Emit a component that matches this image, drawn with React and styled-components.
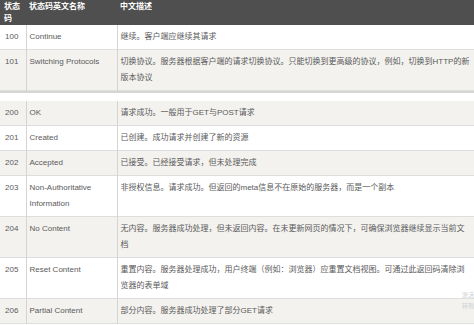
import styled, { createGlobalStyle } from "styled-components";

const GlobalStyle = createGlobalStyle`
  html, body {
    margin: 0;
    padding: 0;
    background: #fff;
    overflow: hidden;
  }
  body {
    font-family: "Liberation Sans", "Noto Sans CJK SC", sans-serif;
  }
`;

const infoRows = [
  { code: "100", name: "Continue", desc: "继续。客户端应继续其请求" },
  {
    code: "101",
    name: "Switching Protocols",
    desc: "切换协议。服务器根据客户端的请求切换协议。只能切换到更高级的协议，例如，切换到HTTP的新版本协议",
  },
];

const successRows = [
  { code: "200", name: "OK", desc: "请求成功。一般用于GET与POST请求" },
  { code: "201", name: "Created", desc: "已创建。成功请求并创建了新的资源" },
  { code: "202", name: "Accepted", desc: "已接受。已经接受请求，但未处理完成" },
  {
    code: "203",
    name: "Non-Authoritative Information",
    desc: "非授权信息。请求成功。但返回的meta信息不在原始的服务器，而是一个副本",
  },
  {
    code: "204",
    name: "No Content",
    desc: "无内容。服务器成功处理，但未返回内容。在未更新网页的情况下，可确保浏览器继续显示当前文档",
  },
  {
    code: "205",
    name: "Reset Content",
    desc: "重置内容。服务器处理成功，用户终端（例如：浏览器）应重置文档视图。可通过此返回码清除浏览器的表单域",
  },
  { code: "206", name: "Partial Content", desc: "部分内容。服务器成功处理了部分GET请求" },
];

function Cols() {
  return (
    <colgroup>
      <col style={{ width: 26 }} />
      <col style={{ width: 91 }} />
      <col style={{ width: 357 }} />
    </colgroup>
  );
}

export default function App() {
  return (
    <>
      <GlobalStyle />
      <Page>
        <Table $first>
          <Cols />
          <thead>
            <tr>
              <Th>状态码</Th>
              <Th>状态码英文名称</Th>
              <Th>中文描述</Th>
            </tr>
          </thead>
          <tbody>
            {infoRows.map((r, i) => (
              <Row key={r.code} $shaded={i % 2 === 1}>
                <Td>{r.code}</Td>
                <Td>{r.name}</Td>
                <Td>{r.desc}</Td>
              </Row>
            ))}
          </tbody>
        </Table>
        <Table>
          <Cols />
          <tbody>
            {successRows.map((r, i) => (
              <Row key={r.code} $shaded={i % 2 === 0}>
                <Td>{r.code}</Td>
                <Td>{r.name}</Td>
                <Td>{r.desc}</Td>
              </Row>
            ))}
          </tbody>
        </Table>
        <Watermark>
          <span>激活</span>
          <span>转到</span>
        </Watermark>
      </Page>
    </>
  );
}

const Page = styled.div`
  position: relative;
  width: 474px;
  height: 325px;
  display: flex;
  flex-direction: column;
  gap: 10px;
`;

const Table = styled.table`
  width: 474px;
  table-layout: fixed;
  border-collapse: collapse;
  font-size: 8px;
  color: #5a5a5a;
  ${(p) => p.$first && `box-shadow: 0 2px 0 #d6d6d6;`}
`;

const Th = styled.th`
  background: #4f4f4f;
  color: #fff;
  font-weight: bold;
  text-align: left;
  vertical-align: top;
  line-height: 12px;
  padding: 1px 3px 0 3px;
  height: 24px;
  box-sizing: border-box;
  &:first-child {
    padding-left: 4px;
  }
`;

const Row = styled.tr`
  background: ${(p) => (p.$shaded ? "#f3f2ef" : "#fff")};
  border-bottom: 1px solid #dedede;
`;

const Td = styled.td`
  vertical-align: top;
  line-height: 16px;
  padding: 4px 3px;
  & + & {
    border-left: 1px solid #d4d4d4;
  }
  &:first-child {
    padding-left: 5px;
  }
`;

const Watermark = styled.div`
  position: absolute;
  left: 462px;
  top: 291px;
  display: flex;
  flex-direction: column;
  gap: 2px;
  font-size: 6px;
  line-height: 9px;
  color: #cfcfcf;
  white-space: nowrap;
`;
